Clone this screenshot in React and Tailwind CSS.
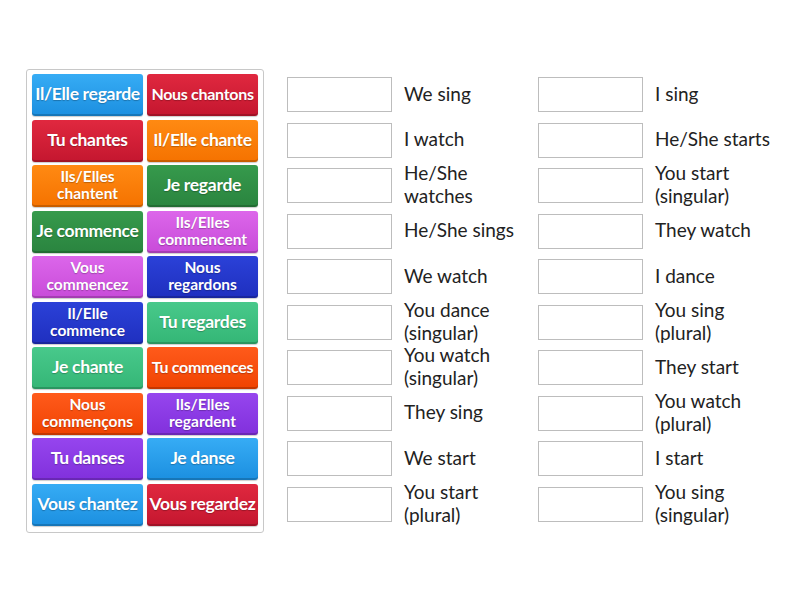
const TILES = [
  ['Il/Elle regarde', 'blue'],
  ['Nous chantons', 'crimson', 'fit'],
  ['Tu chantes', 'crimson'],
  ['Il/Elle chante', 'orange'],
  ['Ils/Elles chantent', 'orange', 'small'],
  ['Je regarde', 'green'],
  ['Je commence', 'green'],
  ['Ils/Elles commencent', 'orchid', 'small'],
  ['Vous commencez', 'orchid', 'small'],
  ['Nous regardons', 'navy', 'small'],
  ['Il/Elle commence', 'navy', 'small'],
  ['Tu regardes', 'mint'],
  ['Je chante', 'mint'],
  ['Tu commences', 'flame', 'fit'],
  ['Nous commençons', 'flame', 'small'],
  ['Ils/Elles regardent', 'purple', 'small'],
  ['Tu danses', 'purple'],
  ['Je danse', 'blue'],
  ['Vous chantez', 'blue'],
  ['Vous regardez', 'crimson'],
]

const COLORS = {
  blue: 'from-[#36acf5] to-[#1b8fe0]',
  crimson: 'from-[#e0283f] to-[#c4162f]',
  orange: 'from-[#ff8a12] to-[#f57200]',
  green: 'from-[#369a4c] to-[#2a843f]',
  orchid: 'from-[#dc66ea] to-[#c84bd9]',
  navy: 'from-[#2b41d8] to-[#1f2fbf]',
  mint: 'from-[#48c98b] to-[#34b676]',
  flame: 'from-[#ff5a1a] to-[#f04300]',
  purple: 'from-[#9645ee] to-[#8130dc]',
}

const SIZES = {
  big: 'text-[17.5px] leading-[20px] tracking-[-0.3px] whitespace-nowrap',
  fit: 'text-[16px] leading-[20px] tracking-[-0.3px] whitespace-nowrap',
  small: 'text-[15.5px] leading-[17px] px-1',
}

const LEFT = [
  ['We sing'],
  ['I watch'],
  ['He/She', 'watches'],
  ['He/She sings'],
  ['We watch'],
  ['You dance', '(singular)'],
  ['You watch', '(singular)'],
  ['They sing'],
  ['We start'],
  ['You start', '(plural)'],
]

const RIGHT = [
  ['I sing'],
  ['He/She starts'],
  ['You start', '(singular)'],
  ['They watch'],
  ['I dance'],
  ['You sing', '(plural)'],
  ['They start'],
  ['You watch', '(plural)'],
  ['I start'],
  ['You sing', '(singular)'],
]

function Tile({ text, color, size = 'big' }) {
  return (
    <div className={`h-[42px] rounded-[3px] bg-linear-to-b ${COLORS[color]} shadow-[inset_0_-2px_0_rgba(0,0,0,0.18),0_1px_1px_rgba(0,0,0,0.2)] flex items-center justify-center text-center text-white font-bold pb-[2px] [text-shadow:0_1px_1px_rgba(0,0,0,0.25)] ${SIZES[size]}`}>
      {text}
    </div>
  )
}

function Slot({ lines }) {
  return (
    <div className="h-[45.5px] flex items-center gap-[12px]">
      <div className="w-[105px] h-[35px] mb-[2px] border border-[#bdbdbd] bg-white shrink-0" />
      <div className="text-[19px] leading-[23px] text-[#222] mb-[5px]">
        {lines.map((l) => <div key={l}>{l}</div>)}
      </div>
    </div>
  )
}

export default function App() {
  return (
    <div className="w-[800px] h-[600px] bg-white flex items-start pt-[69px] pl-[26px] font-['Lato','Liberation_Sans',sans-serif]">
      <div className="w-[238px] border border-[#c8c8c8] rounded-[3px] px-[5px] pt-[4px] pb-[6px] grid grid-cols-2 gap-x-[4px] gap-y-[3.5px]">
        {TILES.map(([t, c, s]) => <Tile key={t} text={t} color={c} size={s} />)}
      </div>
      <div className="ml-[23px] w-[251px] pt-[4px]">
        {LEFT.map((l) => <Slot key={l.join()} lines={l} />)}
      </div>
      <div className="pt-[4px]">
        {RIGHT.map((l) => <Slot key={l.join()} lines={l} />)}
      </div>
    </div>
  )
}
